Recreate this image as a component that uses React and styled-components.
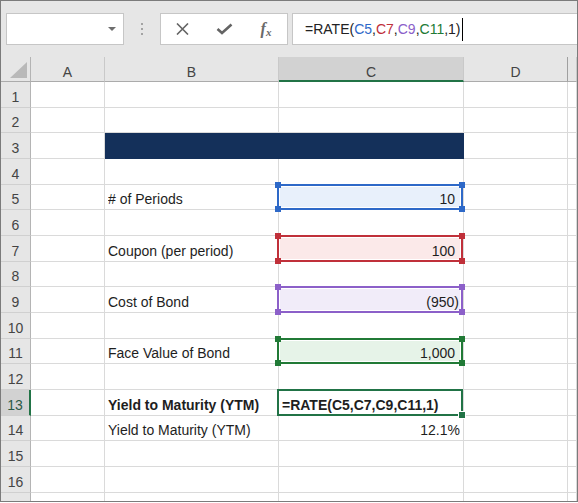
import React from "react";
import styled, { createGlobalStyle } from "styled-components";

const GlobalStyle = createGlobalStyle`
  html, body { margin: 0; padding: 0; background: #fff; }
  body { font-family: "Liberation Sans", Arial, sans-serif; }
`;

const Frame = styled.div`
  width: 578px;
  height: 502px;
  box-sizing: border-box;
  border: 1px solid #7b7b7b;
  overflow: hidden;
  display: flex;
  flex-direction: column;
  background: #fff;
  font-family: "Liberation Sans", Arial, sans-serif;
`;

const Toolbar = styled.div`
  height: 56px;
  flex: none;
  box-sizing: border-box;
  background: #e6e6e6;
  display: flex;
  align-items: flex-start;
  padding: 12px 0 0 5px;
`;

const NameBox = styled.div`
  width: 118px;
  height: 32px;
  box-sizing: border-box;
  border: 1px solid #c6c6c6;
  background: #fff;
  display: flex;
  justify-content: flex-end;
  align-items: center;
  padding-right: 7px;
`;

const Caret = styled.span`
  width: 0;
  height: 0;
  border-left: 4px solid transparent;
  border-right: 4px solid transparent;
  border-top: 4px solid #6e6e6e;
`;

const Grip = styled.div`
  margin: 10px 0 0 17px;
  display: flex;
  flex-direction: column;
  gap: 3px;
  & > span {
    width: 2px;
    height: 2px;
    background: #a3a3a3;
  }
`;

const ButtonGroup = styled.div`
  margin-left: 17px;
  width: 128px;
  height: 32px;
  box-sizing: border-box;
  border: 1px solid #c6c6c6;
  background: #fff;
  display: grid;
  grid-template-columns: repeat(3, 42px);
  align-items: center;
  justify-items: center;
`;

const FxLabel = styled.span`
  font-family: "Liberation Serif", "Times New Roman", serif;
  font-style: italic;
  font-weight: bold;
  color: #6a6a6a;
  font-size: 16px;
  line-height: 16px;
  display: flex;
  align-items: flex-end;
  & > small {
    font-size: 11px;
    line-height: 11px;
    transform: translateY(1px);
  }
`;

const FormulaInput = styled.div`
  margin-left: 4px;
  flex: 1;
  height: 32px;
  box-sizing: border-box;
  border: 1px solid #c6c6c6;
  border-right: none;
  background: #fff;
  display: flex;
  align-items: center;
  padding-left: 12px;
  font-size: 14px;
  line-height: 16px;
  color: #222;
  white-space: nowrap;
`;

const Tall = styled.span`
  display: inline-block;
  transform: scaleY(1.1);
  transform-origin: 50% 80%;
`;

const Ref = styled.span`
  color: ${(p) => p.$c};
`;

const TextCursor = styled.span`
  display: inline-block;
  width: 1px;
  height: 23px;
  background: #000;
  margin-left: 1px;
`;

const Sheet = styled.div`
  flex: none;
  display: grid;
  grid-template-columns: 30px 74px 174px 185px 104px 1fr;
  grid-template-rows: 25px;
  grid-auto-rows: 25.67px;
`;

const Corner = styled.div`
  box-sizing: border-box;
  background: #e6e6e6;
  border-right: 1px solid #b4b4b4;
  border-bottom: 1px solid #ababab;
  display: flex;
  justify-content: flex-end;
  align-items: flex-end;
  padding: 0 3px 3px 0;
`;

const ColHeader = styled.div`
  box-sizing: border-box;
  background: ${(p) => (p.$active ? "#d2d2d2" : "#e6e6e6")};
  border-right: 1px solid ${(p) => (p.$edge ? "#a0a0a0" : "#c9c9c9")};
  border-bottom: ${(p) => (p.$active ? "2px solid #217346" : "1px solid #ababab")};
  display: flex;
  justify-content: center;
  align-items: flex-end;
  padding-bottom: ${(p) => (p.$active ? "0px" : "1px")};
  font-size: 14px;
  line-height: 16px;
  color: #444;
`;

const RowHeader = styled.div`
  box-sizing: border-box;
  background: ${(p) => (p.$active ? "#d2d2d2" : "#e6e6e6")};
  border-right: ${(p) => (p.$active ? "2px solid #217346" : "1px solid #b4b4b4")};
  border-bottom: 1px solid #d0d0d0;
  display: flex;
  justify-content: center;
  align-items: flex-end;
  padding-bottom: 2px;
  font-size: 14px;
  line-height: 16px;
  color: ${(p) => (p.$active ? "#2a5a45" : "#444")};
`;

const Cell = styled.div`
  position: relative;
  box-sizing: border-box;
  background: ${(p) => p.$fill || "transparent"};
  border-right: 1px solid ${(p) => p.$line || "#dadada"};
  border-bottom: 1px solid ${(p) => p.$line || "#dadada"};
  display: flex;
  align-items: flex-end;
  justify-content: ${(p) => (p.$right ? "flex-end" : "flex-start")};
  padding: 0 ${(p) => p.$padRight || "3px"} 2px 3px;
  font-size: 14px;
  line-height: 16px;
  font-weight: ${(p) => (p.$bold ? "bold" : "normal")};
  color: #1e1e1e;
  white-space: nowrap;
`;

const RangeBox = styled.div`
  position: absolute;
  top: -1px;
  left: -2px;
  right: 0;
  bottom: -1px;
  border: 2px solid ${(p) => p.$c};
  box-shadow: ${(p) => (p.$plain ? "none" : "inset 0 0 0 1px #fff")};
  z-index: 2;
  pointer-events: none;
`;

const Handle = styled.span`
  position: absolute;
  width: 6px;
  height: 6px;
  background: ${(p) => p.$c};
  ${(p) => (p.$top ? "top: -4px;" : "bottom: -4px;")}
  ${(p) => (p.$left ? "left: -4px;" : "right: -4px;")}
`;

const FillHandle = styled.span`
  position: absolute;
  right: -5px;
  bottom: -5px;
  width: 6px;
  height: 6px;
  background: #217346;
  border: 1px solid #fff;
`;

const NAVY = "#14305a";

const refs = {
  5: { c: "#2e69c8", fill: "#e8f0fb", text: "10", pos: true },
  7: { c: "#c0303a", fill: "#fbe9e9", text: "100", pos: true },
  9: { c: "#8c60c9", fill: "#f1ecf9", text: "(950)", pos: false },
  11: { c: "#217a36", fill: "#e6f3e8", text: "1,000", pos: true },
};

const labels = {
  5: "# of Periods",
  7: "Coupon (per period)",
  9: "Cost of Bond",
  11: "Face Value of Bond",
};

function RefCell({ r }) {
  return (
    <Cell $right $fill={r.fill} $padRight={r.pos ? "8px" : "4px"}>
      <Tall>{r.text}</Tall>
      <RangeBox $c={r.c}>
        <Handle $c={r.c} $top $left />
        <Handle $c={r.c} $top />
        <Handle $c={r.c} $left />
        <Handle $c={r.c} />
      </RangeBox>
    </Cell>
  );
}

function Row({ n }) {
  let b = <Cell />;
  let c = <Cell />;
  if (n === 3) {
    b = <Cell $fill={NAVY} $line={NAVY} />;
    c = <Cell $fill={NAVY} $line={NAVY} />;
  } else if (refs[n]) {
    b = (
      <Cell>
        <Tall>{labels[n]}</Tall>
      </Cell>
    );
    c = <RefCell r={refs[n]} />;
  } else if (n === 13) {
    b = (
      <Cell $bold>
        <Tall>Yield to Maturity (YTM)</Tall>
      </Cell>
    );
    c = (
      <Cell $bold>
        <Tall>=RATE(C5,C7,C9,C11,1)</Tall>
        <RangeBox $c="#217346" $plain>
          <FillHandle />
        </RangeBox>
      </Cell>
    );
  } else if (n === 14) {
    b = (
      <Cell>
        <Tall>Yield to Maturity (YTM)</Tall>
      </Cell>
    );
    c = (
      <Cell $right>
        <Tall>12.1%</Tall>
      </Cell>
    );
  }
  return (
    <>
      <RowHeader $active={n === 13}>
        <Tall>{n}</Tall>
      </RowHeader>
      <Cell />
      {b}
      {c}
      <Cell />
      <Cell />
    </>
  );
}

export default function App() {
  const rows = Array.from({ length: 17 }, (_, i) => i + 1);
  return (
    <>
      <GlobalStyle />
      <Frame>
        <Toolbar>
          <NameBox>
            <Caret />
          </NameBox>
          <Grip>
            <span />
            <span />
            <span />
          </Grip>
          <ButtonGroup>
            <svg width="13" height="12" viewBox="0 0 13 12">
              <path d="M1 0.5 L12 11.5 M12 0.5 L1 11.5" stroke="#646464" strokeWidth="1.6" fill="none" />
            </svg>
            <svg width="17" height="12" viewBox="0 0 17 12">
              <path d="M1.5 6 L6 10 L15.5 1.5" stroke="#646464" strokeWidth="2.6" fill="none" />
            </svg>
            <FxLabel>
              f<small>x</small>
            </FxLabel>
          </ButtonGroup>
          <FormulaInput>
            <Tall>
              =RATE(<Ref $c="#2e69c8">C5</Ref>,<Ref $c="#c0303a">C7</Ref>,
              <Ref $c="#8c60c9">C9</Ref>,<Ref $c="#217a36">C11</Ref>,1)
            </Tall>
            <TextCursor />
          </FormulaInput>
        </Toolbar>
        <Sheet>
          <Corner>
            <svg width="17" height="16" viewBox="0 0 17 16">
              <polygon points="17,0 17,16 0,16" fill="#b9b9b9" />
            </svg>
          </Corner>
          <ColHeader>
            <Tall>A</Tall>
          </ColHeader>
          <ColHeader>
            <Tall>B</Tall>
          </ColHeader>
          <ColHeader $active>
            <Tall>C</Tall>
          </ColHeader>
          <ColHeader $edge>
            <Tall>D</Tall>
          </ColHeader>
          <ColHeader />
          {rows.map((n) => (
            <Row key={n} n={n} />
          ))}
        </Sheet>
      </Frame>
    </>
  );
}
